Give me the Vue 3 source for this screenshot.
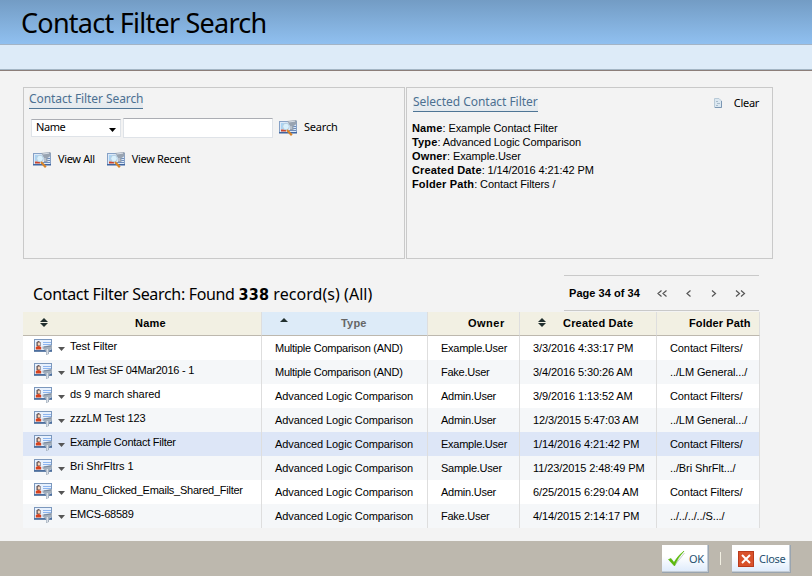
<template>
  <div class="page">
    <svg class="defs" width="0" height="0" aria-hidden="true">
      <symbol id="icon-search" viewBox="0 0 18 16">
        <rect x="0.5" y="1.5" width="17" height="11" fill="#dce9f8" stroke="#86a1c6" />
        <rect x="0" y="12" width="18" height="1.5" fill="#3f65a0" />
        <rect x="2" y="3" width="6" height="6" fill="#a9d3f3" />
        <path d="M13 6.500h4M13 8.500h4M10 10.500h7" stroke="#6f8dbb" />
        <path d="M8 1L17.500 0V4L14.500 6V10H11V6Z" fill="#98a3b1" />
        <path d="M9.500 2L16 1.200M12 6V9" stroke="#d6dce4" />
        <path d="M2 10.500h5" stroke="#c9452d" stroke-width="2" />
        <circle cx="7" cy="6.500" r="3.300" fill="#d9f0fc" stroke="#b5cde0" />
        <path d="M8 10L12.800 15.300" stroke="#d88428" stroke-width="2.200" />
      </symbol>
      <symbol id="icon-contact" viewBox="0 0 18 16">
        <rect x="0.5" y="0.5" width="17" height="11" fill="#e8f1fd" stroke="#7c98bd" />
        <path d="M0 12h18" stroke="#416696" stroke-width="1.6" />
        <path d="M9 3.500h8M9 5.500h8" stroke="#8cb4ee" />
        <path d="M2.500 7V3.500Q4.500 0.500 6.500 3.500V7Z" fill="#5a4a4c" />
        <rect x="3.700" y="3.500" width="2.300" height="3" fill="#f6d3ba" />
        <path d="M1.800 10.500V8Q4.500 6 7.200 8V10.500Z" fill="#d6421d" />
        <path d="M8.500 7.500L18 6V9.500L15 12V15L12 16V12L8.500 9.500Z" fill="#a3afbd" />
        <path d="M10 8L17 7" stroke="#77869a" />
        <path d="M13.300 10V15" stroke="#dfe5ec" stroke-width="1.200" />
      </symbol>
    </svg>

    <header class="banner">
      <h1>Contact Filter Search</h1>
    </header>
    <div class="subbar"></div>

    <main class="content">
      <div class="panels">
        <section class="panel search-panel">
          <h2 class="panel-title">Contact Filter Search</h2>
          <div class="search-row">
            <div class="select">
              <span>Name</span>
              <svg width="7" height="4" viewBox="0 0 7 4"><path d="M0 0h7L3.500 4Z" fill="#000" /></svg>
            </div>
            <input class="field" type="text" />
            <a class="action"><svg width="18" height="16"><use href="#icon-search" /></svg><span>Search</span></a>
          </div>
          <div class="view-row">
            <a class="action"><svg width="18" height="16"><use href="#icon-search" /></svg><span>View All</span></a>
            <a class="action"><svg width="18" height="16"><use href="#icon-search" /></svg><span>View Recent</span></a>
          </div>
        </section>

        <section class="panel selected-panel">
          <div class="selected-head">
            <h2 class="panel-title wide">Selected Contact Filter</h2>
            <a class="clear">
              <svg width="8" height="10" viewBox="0 0 8 10">
                <path d="M0.500 0.500H5L7.500 3V9.500H0.500Z" fill="#dce8f1" stroke="#b9cad7" />
                <path d="M7.500 3V9.500H1" fill="none" stroke="#7c97b3" />
                <path d="M2 3.500h2M3 5.500h3M2 7.500h2" stroke="#a9bccb" />
              </svg>
              <span>Clear</span>
            </a>
          </div>
          <dl class="details">
            <div v-for="item in details" :key="item.label">
              <dt>{{ item.label }}</dt><dd>: {{ item.value }}</dd>
            </div>
          </dl>
        </section>
      </div>

      <div class="results-head">
        <h3>Contact Filter Search: Found <b>338</b><span> record(s) (All)</span></h3>
        <nav class="pager">
          <b>Page 34 of 34</b>
          <svg width="11" height="7" viewBox="0 0 11 7"><path d="M4.500 0.500L1 3.500L4.500 6.500M9.500 0.500L6 3.500L9.500 6.500" /></svg>
          <svg width="6" height="7" viewBox="0 0 6 7"><path d="M4.500 0.500L1 3.500L4.500 6.500" /></svg>
          <svg class="next" width="6" height="7" viewBox="0 0 6 7"><path d="M1 0.500L4.500 3.500L1 6.500" /></svg>
          <svg width="11" height="7" viewBox="0 0 11 7"><path d="M1 0.500L4.500 3.500L1 6.500M6 0.500L9.500 3.500L6 6.500" /></svg>
        </nav>
      </div>

      <table class="grid">
        <colgroup>
          <col class="c-name" /><col class="c-type" /><col class="c-owner" /><col class="c-date" /><col class="c-path" />
        </colgroup>
        <thead>
          <tr>
            <th>
              <div class="th th-name">
                <svg width="8" height="9" viewBox="0 0 8 9"><path d="M0 4L4 0L8 4ZM0 5H8L4 9Z" fill="#22302f" /></svg>
                <span>Name</span>
              </div>
            </th>
            <th class="sorted">
              <div class="th th-type">
                <svg width="8" height="4" viewBox="0 0 8 4"><path d="M0 4L4 0L8 4Z" fill="#22302f" /></svg>
                <span>Type</span>
              </div>
            </th>
            <th><div class="th th-owner"><span>Owner</span></div></th>
            <th>
              <div class="th th-date">
                <svg width="8" height="9" viewBox="0 0 8 9"><path d="M0 4L4 0L8 4ZM0 5H8L4 9Z" fill="#22302f" /></svg>
                <span>Created Date</span>
              </div>
            </th>
            <th><div class="th th-path"><span>Folder Path</span></div></th>
          </tr>
        </thead>
        <tbody>
          <tr v-for="row in rows" :key="row.name" :class="{ active: row.name === selected }">
            <td>
              <div class="name-cell">
                <svg width="18" height="16"><use href="#icon-contact" /></svg>
                <svg class="caret" width="7" height="4" viewBox="0 0 7 4"><path d="M0 0h7L3.500 4Z" fill="#555" /></svg>
                <span :class="{ tight: row.tight }">{{ row.name }}</span>
              </div>
            </td>
            <td :class="{ tight: row.type.startsWith('Multiple') }">{{ row.type }}</td>
            <td class="tight">{{ row.owner }}</td>
            <td>{{ row.created }}</td>
            <td>{{ row.path }}</td>
          </tr>
        </tbody>
      </table>
    </main>

    <footer class="footer">
      <button class="btn btn-ok">
        <svg width="18" height="16" viewBox="0 0 18 16">
          <path d="M2 9.500L6.500 14.500L16.500 2" fill="none" stroke="#c5cdd0" stroke-width="1" />
          <path d="M0.500 8.500L3 7.500L6 11.500Q9.500 5 16 0Q9.500 7 6.500 15Z" fill="#5bb80c" stroke="#5bb80c" stroke-width="0.6" />
        </svg>
        <span>OK</span>
      </button>
      <i class="divider"></i>
      <button class="btn btn-close">
        <svg width="16" height="16" viewBox="0 0 16 16">
          <rect x="0.500" y="0.500" width="15" height="15" fill="#d9512a" stroke="#b93b1c" />
          <path d="M4 4L12 12M12 4L4 12" stroke="#fff" stroke-width="2" />
        </svg>
        <span>Close</span>
      </button>
    </footer>
  </div>
</template>

<script setup>
import { ref } from 'vue';

const selected = ref('Example Contact Filter');

const details = [
  { label: 'Name', value: 'Example Contact Filter' },
  { label: 'Type', value: 'Advanced Logic Comparison' },
  { label: 'Owner', value: 'Example.User' },
  { label: 'Created Date', value: '1/14/2016 4:21:42 PM' },
  { label: 'Folder Path', value: 'Contact Filters /' }
];

const rows = [
  { name: 'Test Filter', type: 'Multiple Comparison (AND)', owner: 'Example.User', created: '3/3/2016 4:33:17 PM', path: 'Contact Filters/' },
  { name: 'LM Test SF 04Mar2016 - 1', type: 'Multiple Comparison (AND)', owner: 'Fake.User', created: '3/4/2016 5:30:26 AM', path: '../LM General.../', tight: true },
  { name: 'ds 9 march shared', type: 'Advanced Logic Comparison', owner: 'Admin.User', created: '3/9/2016 1:13:52 AM', path: 'Contact Filters/' },
  { name: 'zzzLM Test 123', type: 'Advanced Logic Comparison', owner: 'Admin.User', created: '12/3/2015 5:47:03 AM', path: '../LM General.../' },
  { name: 'Example Contact Filter', type: 'Advanced Logic Comparison', owner: 'Example.User', created: '1/14/2016 4:21:42 PM', path: 'Contact Filters/', tight: true },
  { name: 'Bri ShrFltrs 1', type: 'Advanced Logic Comparison', owner: 'Sample.User', created: '11/23/2015 2:48:49 PM', path: '../Bri ShrFlt.../' },
  { name: 'Manu_Clicked_Emails_Shared_Filter', type: 'Advanced Logic Comparison', owner: 'Admin.User', created: '6/25/2015 6:29:04 AM', path: 'Contact Filters/', tight: true },
  { name: 'EMCS-68589', type: 'Advanced Logic Comparison', owner: 'Fake.User', created: '4/14/2015 2:14:17 PM', path: '../../../../S.../', tight: true }
];
</script>

<style>
body {
  margin: 0;
  background: #f3f3f3;
}
</style>

<style scoped>
.page {
  width: 812px;
  height: 576px;
  display: flex;
  flex-direction: column;
  overflow: hidden;
  background: #f3f3f3;
  color: #000;
  font: 11px/14px "Liberation Sans", Arial, sans-serif;
}

.page * {
  box-sizing: border-box;
}

.defs {
  position: absolute;
}

h1, h2, h3, dl, dd {
  margin: 0;
  font-weight: normal;
}

svg {
  display: block;
  flex: none;
}

.banner {
  height: 45px;
  flex: none;
  padding-left: 21px;
  background: linear-gradient(#739cc4, #90c0f0);
  border-bottom: 1px solid #a3b4c6;
}

h1 {
  font: 27px/46px "Noto Sans", sans-serif;
  letter-spacing: -0.75px;
}

.subbar {
  height: 26px;
  flex: none;
  background: #ddebf8;
  border-bottom: 1px solid #8c7f7a;
  box-shadow: inset 0 -1px #a3b5c4;
}

.content {
  flex: 1;
  padding: 16px 0 0 23px;
}

.panels {
  display: flex;
  gap: 1px;
}

.panel {
  height: 172px;
  border: 1px solid #c9c9c9;
}

.search-panel {
  width: 382px;
  padding: 3px 0 0 5px;
}

.selected-panel {
  width: 367px;
  padding: 6px 13px 0 5px;
}

.panel-title {
  width: max-content;
  height: 18px;
  border-bottom: 1px solid #4f7595;
  background: linear-gradient(#f3f3f3, #e3e9ee);
  color: #4c7091;
  font: 12px/15px "Noto Sans", sans-serif;
  letter-spacing: -0.08px;
}

.panel-title.wide {
  letter-spacing: -0.04px;
}

.search-row {
  display: flex;
  align-items: center;
  height: 20px;
  margin: 9px 0 0 2px;
}

.select {
  display: flex;
  align-items: center;
  justify-content: space-between;
  width: 90px;
  height: 18px;
  padding: 0 4px;
  background: #fff;
  border: 1px solid #dfe3e8;
  border-top-color: #abadb3;
  font: 11px/16px "Noto Sans", sans-serif;
  letter-spacing: -0.4px;
}

.select span {
  margin-top: -2px;
}

.select svg {
  margin-top: 4px;
}

.field {
  width: 150px;
  height: 20px;
  margin-left: 2px;
  background: #fff;
  border: 1px solid #dfe3e8;
  border-top-color: #abadb3;
}

.action {
  display: flex;
  align-items: center;
  gap: 7px;
  font: 11px/16px "Noto Sans", sans-serif;
  letter-spacing: -0.35px;
}

.action span {
  margin-top: -2px;
}

.search-row .action {
  margin-left: 6px;
  letter-spacing: -0.2px;
}

.view-row {
  display: flex;
  gap: 12px;
  margin: 14px 0 0 4px;
}

.selected-head {
  display: flex;
  justify-content: space-between;
  padding-left: 1px;
}

.clear {
  display: flex;
  align-items: center;
  gap: 12px;
  font: 11px/16px "Noto Sans", sans-serif;
  letter-spacing: -0.3px;
}

.details {
  margin-top: 9px;
}

.details div {
  display: flex;
  height: 14px;
  white-space: pre;
}

.details dt {
  font-weight: bold;
  letter-spacing: 0.15px;
}

.details dd {
  letter-spacing: -0.1px;
}

.results-head {
  display: flex;
  justify-content: space-between;
  width: 736px;
  height: 37px;
  margin-top: 16px;
}

h3 {
  padding-left: 10px;
  font: 16px/38px "Noto Sans", sans-serif;
  letter-spacing: -0.33px;
  white-space: pre;
}

h3 b {
  font-family: "DejaVu Sans", sans-serif;
  font-stretch: condensed;
  letter-spacing: 0.2px;
}

h3 span {
  letter-spacing: 0.05px;
}

.pager {
  display: flex;
  align-items: center;
  width: 195px;
  height: 36px;
  padding-left: 5px;
  border-top: 1px solid #c9c9c9;
  border-bottom: 1px solid #c9c9c9;
}

.pager b {
  width: 88px;
  letter-spacing: 0.04px;
}

.pager svg {
  fill: none;
  stroke: #555;
  stroke-width: 1.2;
}

.pager svg + svg {
  margin-left: 18px;
}

.pager svg.next {
  margin-left: 19px;
}

.grid {
  width: 737px;
  table-layout: fixed;
  border-collapse: separate;
  border-spacing: 0;
}

.c-name { width: 239px; }
.c-type { width: 166px; }
.c-owner { width: 92px; }
.c-date { width: 137px; }
.c-path { width: 103px; }

.grid th {
  height: 24px;
  padding: 0;
  background: #f2f0e3;
  border-right: 1px solid #dedede;
  border-bottom: 1px solid #bdb8ae;
}

.grid th.sorted {
  background: #ddebf8;
  color: #666;
}

.th {
  display: flex;
  height: 23px;
  line-height: 23px;
  letter-spacing: 0.2px;
}

.th svg {
  margin-top: 6px;
}

.th-name { padding-left: 17px; gap: 87px; }
.th-type { padding-left: 18px; gap: 53px; }
.th-owner { padding-left: 40px; letter-spacing: 0.5px; }
.th-date { padding-left: 18px; gap: 17px; }
.th-path { padding-left: 32px; letter-spacing: 0.1px; }

.grid td {
  height: 24px;
  padding: 0 0 0 13px;
  border-right: 1px solid #dedede;
  background: #fff;
  letter-spacing: -0.1px;
  white-space: nowrap;
}

.grid tr:nth-child(even) td {
  background: #f5f7f9;
}

.grid tr.active td {
  background: #dde6f7;
}

.grid td:first-child {
  padding: 0 0 0 11px;
}

.name-cell {
  display: flex;
  height: 24px;
  padding-top: 3px;
}

.name-cell span {
  margin-left: 5px;
  letter-spacing: -0.04px;
}

.grid td.tight,
.name-cell .tight {
  letter-spacing: -0.25px;
}

.caret {
  margin: 8px 0 0 6px;
}

.footer {
  display: flex;
  height: 35px;
  flex: none;
  padding: 4px 0 0 662px;
  background: #bdb8ae;
}

.btn {
  display: flex;
  align-items: center;
  height: 28px;
  padding: 0 0 0 6px;
  border: 0;
  background: linear-gradient(#fff 40%, #dbe9fb);
  box-shadow: inset -1px -1px #9aa5b0, inset -2px -2px #c4ccd5;
  color: #27516f;
  font: 11px/16px "Noto Sans", sans-serif;
  letter-spacing: -0.3px;
}

.btn-ok {
  width: 47px;
  gap: 3px;
}

.btn-close {
  width: 59px;
  gap: 5px;
}

.divider {
  width: 1px;
  height: 13px;
  margin: 7px 11px 0;
  background: #f2f0e3;
}
</style>
